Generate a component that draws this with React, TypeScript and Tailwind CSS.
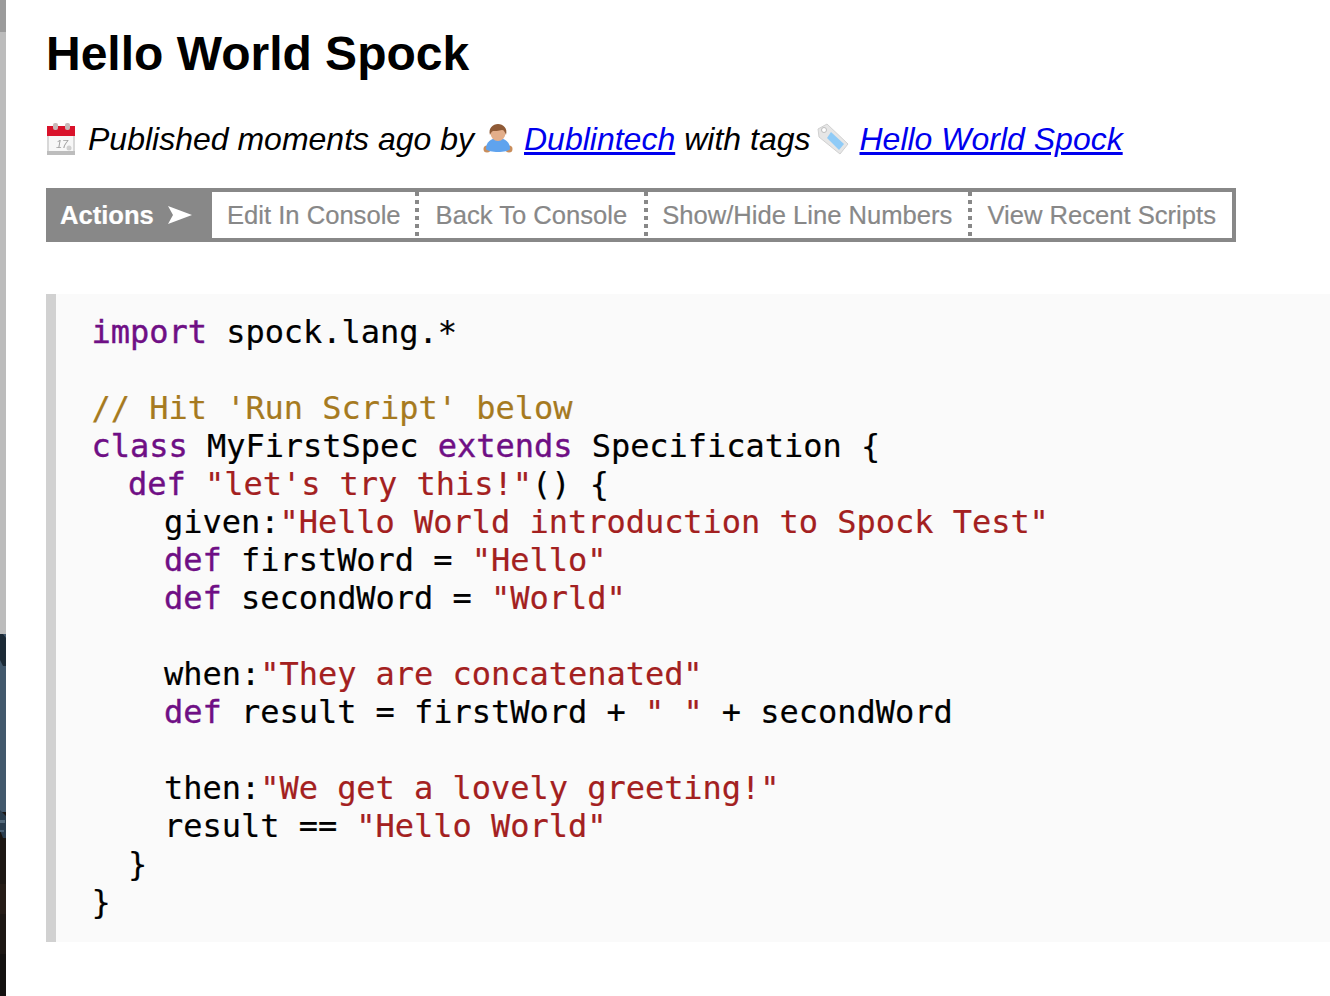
import React from 'react';

type Token = [string, string];

const codeLines: { indent?: string; tokens: Token[] }[] = [
  { tokens: [['k', 'import'], ['p', ' spock.lang.*']] },
  { tokens: [] },
  { tokens: [['c', "// Hit 'Run Script' below"]] },
  { tokens: [['k', 'class'], ['p', ' MyFirstSpec '], ['k', 'extends'], ['p', ' Specification {']] },
  { indent: 'pl-[36.5px]', tokens: [['k', 'def'], ['p', ' '], ['s', '"let\'s try this!"'], ['p', '() {']] },
  { indent: 'pl-[72.5px]', tokens: [['p', 'given:'], ['s', '"Hello World introduction to Spock Test"']] },
  { indent: 'pl-[72.5px]', tokens: [['k', 'def'], ['p', ' firstWord = '], ['s', '"Hello"']] },
  { indent: 'pl-[72.5px]', tokens: [['k', 'def'], ['p', ' secondWord = '], ['s', '"World"']] },
  { tokens: [] },
  { indent: 'pl-[72.5px]', tokens: [['p', 'when:'], ['s', '"They are concatenated"']] },
  { indent: 'pl-[72.5px]', tokens: [['k', 'def'], ['p', ' result = firstWord + '], ['s', '" "'], ['p', ' + secondWord']] },
  { tokens: [] },
  { indent: 'pl-[72.5px]', tokens: [['p', 'then:'], ['s', '"We get a lovely greeting!"']] },
  { indent: 'pl-[72.5px]', tokens: [['p', 'result == '], ['s', '"Hello World"']] },
  { indent: 'pl-[36.5px]', tokens: [['p', '}']] },
  { tokens: [['p', '}']] },
];

const tokenClass: Record<string, string> = {
  k: 'text-[#6f0f85] [-webkit-text-stroke:0.4px_#6f0f85]',
  p: 'text-black [-webkit-text-stroke:0.2px_#000000]',
  c: 'text-[#a67a1f] [-webkit-text-stroke:0.2px_#a67a1f]',
  s: 'text-[#a32020] [-webkit-text-stroke:0.2px_#a32020]',
};

const actions = [
  { label: 'Edit In Console', cls: 'pl-[15px] pr-[14px]' },
  { label: 'Back To Console', cls: 'pl-[17px] pr-[17px]' },
  { label: 'Show/Hide Line Numbers', cls: 'pl-[14px] pr-[16px]' },
  { label: 'View Recent Scripts', cls: 'pl-[15px]' },
];

const CalendarIcon = () => (
  <svg width="30" height="32" viewBox="0 0 30 32" className="shrink-0 blur-[0.5px]">
    <rect x="1" y="3" width="28" height="29" rx="1" fill="#d8d8d8" />
    <rect x="1" y="3" width="28" height="10" fill="#d9132b" />
    <rect x="7" y="0" width="5" height="7" rx="2" fill="#c8b8b8" />
    <rect x="19" y="0" width="5" height="7" rx="2" fill="#c8b8b8" />
    <rect x="3" y="13" width="24" height="15" fill="#f7f7f7" />
    <text x="10" y="25" fontSize="11" fill="#a0a0a0" fontFamily="Liberation Sans, sans-serif">17</text>
    <circle cx="23" cy="25" r="2.5" fill="#d0d0d0" />
    <rect x="1" y="28" width="28" height="4" fill="#bdbdbd" />
  </svg>
);

const UserIcon = () => (
  <svg width="30" height="30" viewBox="0 0 30 30" className="shrink-0 blur-[0.5px]">
    <ellipse cx="4" cy="25" rx="3.5" ry="3.500" fill="#c98e5c" />
    <ellipse cx="26" cy="25" rx="3.5" ry="3.500" fill="#c98e5c" />
    <path d="M3 25c0-7 5-11 12-11s12 4 12 11c-2 4-22 4-24 0z" fill="#5fa3ee" />
    <ellipse cx="15" cy="9" rx="7.500" ry="8" fill="#e3ae8a" />
    <path d="M7 11C5 4 10 0 15 0s10 4 8 11c-1-3-2-5-4-5-3 1-8 1-9 1-2 1-2 2-3 4z" fill="#8f5a36" />
  </svg>
);

const TagIcon = () => (
  <svg width="32" height="32" viewBox="0 0 32 32" className="shrink-0 blur-[0.5px]">
    <path d="M1 6l9-5 21 20-8 10L2 14z" fill="#e6e6e6" stroke="#d0d0d0" strokeWidth="1" />
    <circle cx="7" cy="7" r="2.500" fill="#ffffff" stroke="#bdbdbd" />
    <path d="M14 9l13 12-5 6L10 15z" fill="#8fcbf7" />
  </svg>
);

// bit of desktop wallpaper showing at the left edge
const WallpaperStrip = () => (
  <svg width="6" height="362" viewBox="0 0 6 362" className="block">
    <rect width="6" height="362" fill="#1a1512" />
    <rect width="6" height="178" fill="#42586c" />
    <path d="M0 0h3l3 4v28H3L0 26z" fill="#1c2a36" />
    <path d="M0 176l6 6v22H3l-3-8z" fill="#2a3d4e" />
    <rect y="186" width="5" height="3" fill="#546a7c" />
    <rect y="196" width="4" height="2" fill="#4a6074" />
    <rect y="206" width="6" height="156" fill="#1d1714" />
    <rect y="250" width="6" height="30" fill="#261c17" />
    <rect y="320" width="6" height="42" fill="#141110" />
  </svg>
);

export default function App() {
  return (
    <div className="flex h-[996px] w-full overflow-hidden bg-white font-['Liberation_Sans',Arial,sans-serif]">
      <div className="flex h-full w-[6px] shrink-0 flex-col">
        <div className="h-[32px] bg-[#9b9b9b]" />
        <div className="h-[602px] bg-[#bcbcbc]" />
        <WallpaperStrip />
      </div>

      <div className="min-w-0 flex-1 pl-[40px]">
        <h1 className="mt-[26px] text-[48px] leading-[55px] font-bold text-black">Hello World Spock</h1>

        <p className="mt-[40px] flex h-[36px] items-center text-[32px] whitespace-nowrap text-black italic">
          <CalendarIcon />
          <span className="ml-[12px]">Published moments ago by</span>
          <span className="ml-[9px]"><UserIcon /></span>
          <a href="#" className="ml-[11px] text-[#0000ee] underline">Dublintech</a>
          <span className="ml-[9px]">with tags</span>
          <span className="ml-[7px]"><TagIcon /></span>
          <a href="#" className="ml-[10px] text-[#0000ee] underline">Hello World Spock</a>
        </p>

        <div className="mt-[31px] flex h-[54px] w-[1190px] items-stretch border-4 border-[#888888] text-[25.6px] text-[#888888] [-webkit-text-stroke:0.2px_#888888]">
          <div className="flex w-[162px] shrink-0 items-center gap-[14px] bg-[#888888] pl-[10px] font-bold text-white [-webkit-text-stroke:0.2px_#ffffff]">
            Actions
            <svg width="24" height="18" viewBox="0 0 24 18"><path d="M0 0l24 9L0 18l5-9z" fill="#ffffff" /></svg>
          </div>
          {actions.map((item, i) => (
            <React.Fragment key={item.label}>
              <a href="#" className={`flex items-center whitespace-nowrap ${item.cls}`}>{item.label}</a>
              {i < actions.length - 1 && (
                <span className="w-[4px] shrink-0 bg-[repeating-linear-gradient(to_bottom,#888888_0,#888888_4px,transparent_4px,transparent_8px)]" />
              )}
            </React.Fragment>
          ))}
        </div>

        <div className="mt-[52px] h-[648px] border-l-[10px] border-[#d1d1d1] bg-[#fafafa] pt-[19px] pl-[35.5px] font-['DejaVu_Sans_Mono',monospace] text-[32px] leading-[38px] tracking-[-0.03px] whitespace-pre">
          {codeLines.map((line, i) => (
            <div key={i} className={`h-[38px] ${line.indent ?? ''}`}>
              {line.tokens.map(([kind, text], j) => (
                <span key={j} className={tokenClass[kind]}>{text}</span>
              ))}
            </div>
          ))}
        </div>
      </div>
    </div>
  );
}
